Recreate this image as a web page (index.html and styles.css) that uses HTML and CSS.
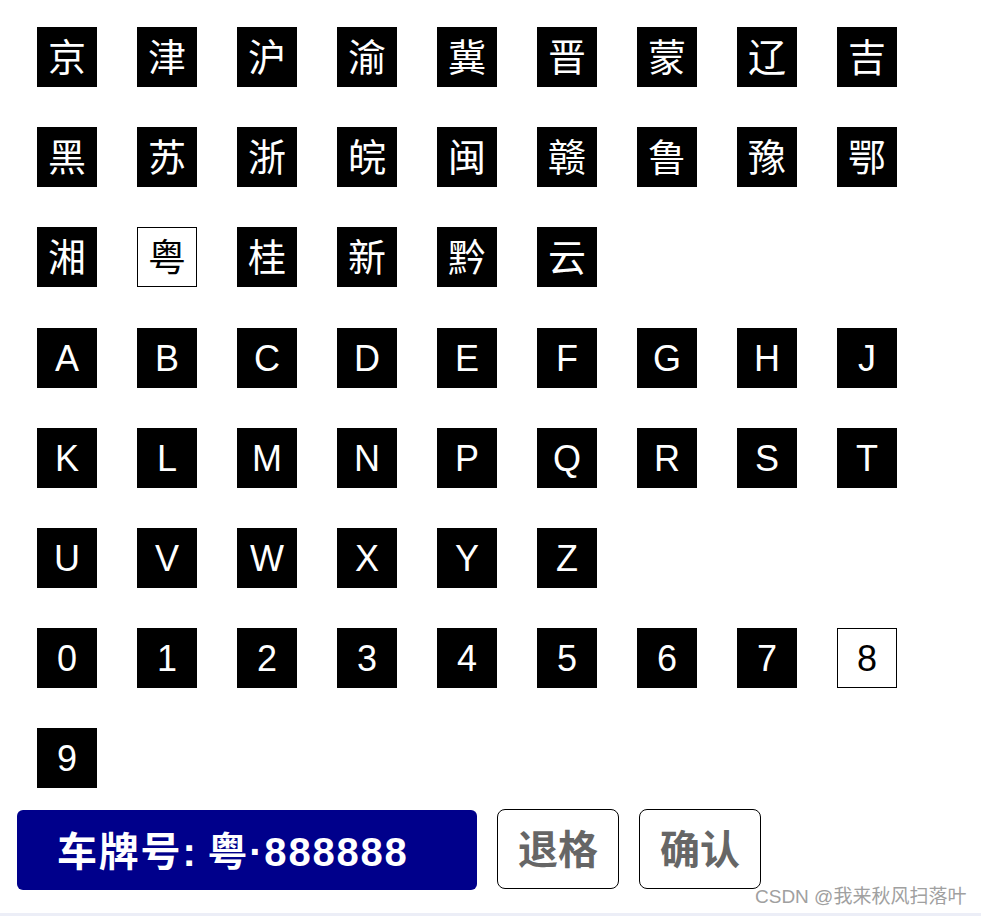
FILE: index.html
```html
<!DOCTYPE html>
<html lang="zh">
<head>
<meta charset="utf-8">
<link rel="stylesheet" href="styles.css">
</head>
<body>
<div class="page">
  <div class="keys han">
    <span class="key">京</span><span class="key">津</span><span class="key">沪</span><span class="key">渝</span><span class="key">冀</span><span class="key">晋</span><span class="key">蒙</span><span class="key">辽</span><span class="key">吉</span>
    <span class="key">黑</span><span class="key">苏</span><span class="key">浙</span><span class="key">皖</span><span class="key">闽</span><span class="key">赣</span><span class="key">鲁</span><span class="key">豫</span><span class="key">鄂</span>
    <span class="key">湘</span><span class="key active">粤</span><span class="key">桂</span><span class="key">新</span><span class="key">黔</span><span class="key">云</span>
  </div>
  <div class="keys letters">
    <span class="key">A</span><span class="key">B</span><span class="key">C</span><span class="key">D</span><span class="key">E</span><span class="key">F</span><span class="key">G</span><span class="key">H</span><span class="key">J</span>
    <span class="key">K</span><span class="key">L</span><span class="key">M</span><span class="key">N</span><span class="key">P</span><span class="key">Q</span><span class="key">R</span><span class="key">S</span><span class="key">T</span>
    <span class="key">U</span><span class="key">V</span><span class="key">W</span><span class="key">X</span><span class="key">Y</span><span class="key">Z</span>
  </div>
  <div class="keys">
    <span class="key">0</span><span class="key">1</span><span class="key">2</span><span class="key">3</span><span class="key">4</span><span class="key">5</span><span class="key">6</span><span class="key">7</span><span class="key active">8</span>
    <span class="key">9</span>
  </div>
  <div class="bar">
    <div class="plate">车牌号: 粤·888888</div>
    <div class="btn">退格</div>
    <div class="btn">确认</div>
  </div>
</div>
<div class="watermark">CSDN @我来秋风扫落叶</div>
<div class="bottomline"></div>
</body>
</html>
```

FILE: styles.css
```css
html, body {
  margin: 0;
  padding: 0;
  background: #fff;
}
body {
  width: 981px;
  height: 916px;
  position: relative;
  overflow: hidden;
  font-family: "Liberation Sans", "Noto Sans CJK SC", sans-serif;
}
.page {
  padding: 7px 0 0 17px;
}
.keys {
  display: grid;
  grid-template-columns: repeat(9, 100px);
}
.keys.letters {
  margin-top: 1px;
}
.key {
  box-sizing: border-box;
  width: 60px;
  height: 60px;
  margin: 20px;
  padding-top: 2px;
  background: #000;
  color: #fff;
  font-size: 36px;
  display: flex;
  align-items: center;
  justify-content: center;
  line-height: 1;
}
.han .key {
  font-size: 38px;
  padding-top: 1px;
}
.key.active {
  background: #fff;
  color: #000;
  border: 1px solid #000;
}
.bar {
  display: flex;
  align-items: flex-start;
  gap: 20px;
  margin-top: 1px;
  height: 81px;
}
.plate {
  box-sizing: border-box;
  width: 460px;
  height: 80px;
  margin-top: 1px;
  padding-bottom: 3px;
  background: #00008b;
  border-radius: 6px;
  color: #fff;
  font-weight: bold;
  font-size: 40px;
  letter-spacing: 1.8px;
  word-spacing: -3px;
  padding-left: 40px;
  display: flex;
  align-items: center;
  white-space: nowrap;
}
.btn {
  box-sizing: border-box;
  height: 80px;
  padding: 0 20px 4px;
  border: 1px solid #000;
  border-radius: 8px;
  color: #666;
  font-weight: bold;
  font-size: 40px;
  display: flex;
  align-items: center;
}
.watermark {
  position: absolute;
  left: 755px;
  top: 885px;
  font-size: 19px;
  color: #a0a0a0;
  line-height: 24px;
  white-space: nowrap;
}
.bottomline {
  position: absolute;
  left: 0;
  bottom: 0;
  width: 981px;
  height: 3px;
  background: #eceef7;
}
```
